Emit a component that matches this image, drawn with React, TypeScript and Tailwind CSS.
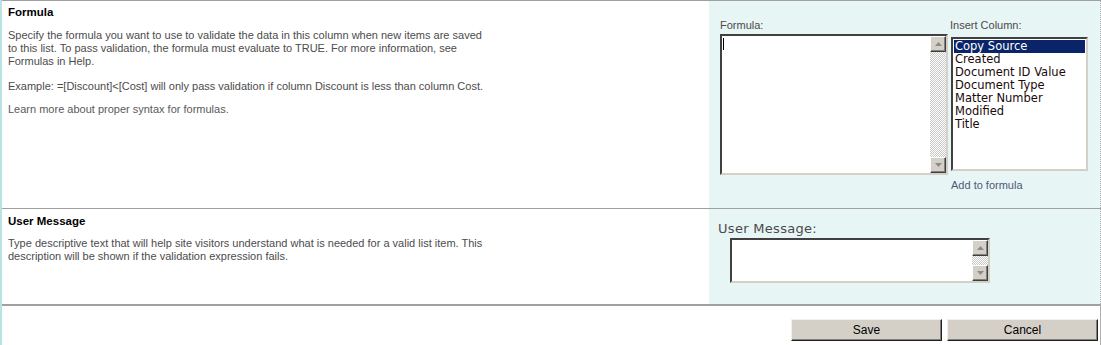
import React from "react";

const ScrollBtn = ({ up }: { up: boolean }) => (
  <div className="w-[16px] h-[16px] bg-[#d4d0c8] border border-t-white border-l-white border-r-[#404040] border-b-[#404040] flex items-center justify-center shadow-[inset_-1px_-1px_0_#808080]">
    <svg width="7" height="4" viewBox="0 0 7 4">
      {up ? <polygon points="3.5,0 7,4 0,4" fill="#8a8a8a" /> : <polygon points="0,0 7,0 3.5,4" fill="#8a8a8a" />}
    </svg>
  </div>
);

const Scrollbar = () => (
  <div className="w-[16px] h-full flex flex-col justify-between bg-[repeating-conic-gradient(#c8c8c8_0%_25%,#ffffff_0%_50%)] bg-[length:2px_2px]">
    <ScrollBtn up />
    <ScrollBtn up={false} />
  </div>
);

const TextBox = ({ w, h, caret }: { w: string; h: string; caret?: boolean }) => (
  <div className={`${w} ${h} border-2 border-t-[#404040] border-l-[#404040] border-r-[#d4d0c8] border-b-[#d4d0c8] bg-white flex`}>
    <div className="flex-1 relative">
      {caret && <div className="absolute left-[1px] top-[2px] w-[1px] h-[12px] bg-black" />}
    </div>
    <Scrollbar />
  </div>
);

const items = ["Copy Source", "Created", "Document ID Value", "Document Type", "Matter Number", "Modified", "Title"];

export default function App() {
  return (
    <div className="w-[1101px] h-[345px] bg-white border-l-2 border-[#b9e3e3] flex flex-col font-['Liberation_Sans',Arial,sans-serif] text-[11px] leading-[13px] overflow-hidden">
      {/* Formula section */}
      <div className="h-[208px] border-t border-[#a0a0a0] flex">
        <div className="w-[707px] pl-[6px] pt-[4px] text-[#4c4c4c]">
          <div className="font-bold text-black text-[11.5px] leading-[14px]">Formula</div>
          <p className="mt-[10px] w-[480px]">
            Specify the formula you want to use to validate the data in this column when new items are saved to this list. To pass validation, the formula must evaluate to TRUE. For more information, see Formulas in Help.
          </p>
          <p className="mt-[12px]">Example: =[Discount]&lt;[Cost] will only pass validation if column Discount is less than column Cost.</p>
          <p className="mt-[10px] text-[#5a5a5a]">Learn more about proper syntax for formulas.</p>
        </div>
        <div className="flex-1 bg-[#e8f5f5] border-r border-dotted border-[#b0b0b0] pl-[11px] pt-[18px] flex gap-[2px]">
          <div className="flex flex-col">
            <div className="text-[#4a4a4a] h-[15px]">Formula:</div>
            <TextBox w="w-[228px]" h="h-[141px]" caret />
          </div>
          <div className="flex flex-col">
            <div className="text-[#4a4a4a] h-[18px]">Insert Column:</div>
            <div className="ml-[1px] w-[137px] h-[134px] border-2 border-t-[#404040] border-l-[#404040] border-r-[#d4d0c8] border-b-[#d4d0c8] bg-white p-[1px] font-['DejaVu_Sans',Verdana,sans-serif] text-[11.5px] leading-[13px] text-[#1a0a0a]">
              {items.map((it, i) => (
                <div key={it} className={i === 0 ? "bg-[#0a246a] text-white pl-[1px] h-[13px]" : "pl-[1px] h-[13px]"}>
                  {it}
                </div>
              ))}
            </div>
            <div className="ml-[1px] mt-[8px] text-[#4c5a78]">Add to formula</div>
          </div>
        </div>
      </div>

      {/* User Message section */}
      <div className="h-[96px] border-t border-[#a0a0a0] flex">
        <div className="w-[707px] pl-[6px] pt-[5px] text-[#4c4c4c]">
          <div className="font-bold text-black text-[11.5px] leading-[14px]">User Message</div>
          <p className="mt-[9px] w-[500px]">
            Type descriptive text that will help site visitors understand what is needed for a valid list item. This description will be shown if the validation expression fails.
          </p>
        </div>
        <div className="flex-1 bg-[#e8f5f5] border-r border-dotted border-[#b0b0b0] pl-[9px] pt-[12px] flex flex-col">
          <div className="text-[#4a4a4a] h-[17px] font-['DejaVu_Sans',Verdana,sans-serif] text-[13px] leading-[15px] tracking-[0.3px]">User Message:</div>
          <div className="ml-[12px]">
            <TextBox w="w-[260px]" h="h-[45px]" />
          </div>
        </div>
      </div>

      {/* Buttons */}
      <div className="flex-1 border-t-2 border-[#a0a0a0] flex justify-end items-start pt-[13px] pr-[2px] gap-[5px] border-r border-r-[#b0b0b0]">
        <button className="w-[151px] h-[22px] bg-[#d4d0c8] border border-t-[#f0f0f0] border-l-[#f0f0f0] border-r-[#202020] border-b-[#202020] shadow-[inset_-1px_-1px_0_#808080] text-black text-[12px]">Save</button>
        <button className="w-[151px] h-[22px] bg-[#d4d0c8] border border-t-[#f0f0f0] border-l-[#f0f0f0] border-r-[#202020] border-b-[#202020] shadow-[inset_-1px_-1px_0_#808080] text-black text-[12px]">Cancel</button>
      </div>
    </div>
  );
}
